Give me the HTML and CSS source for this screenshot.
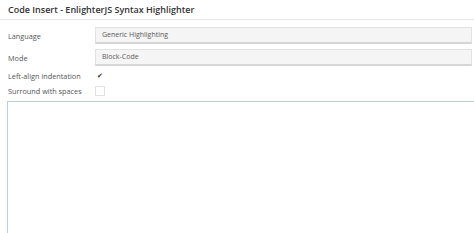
FILE: index.html
```html
<!DOCTYPE html>
<html lang="en">
<head>
  <meta charset="UTF-8">
  <meta name="viewport" content="width=device-width, initial-scale=1.0">
  <title>Code Insert</title>
  <link rel="stylesheet" href="styles.css">
</head>
<body>
  <div class="dialog">
    <div class="dialog-title">Code Insert - EnlighterJS Syntax Highlighter</div>
    <div class="form">
      <div class="row">
        <label class="label">Language</label>
        <div class="select">Generic Highlighting</div>
      </div>
      <div class="row">
        <label class="label">Mode</label>
        <div class="select">Block-Code</div>
      </div>
      <div class="row row-check">
        <label class="label">Left-align indentation</label>
        <span class="checkbox checked">&#10004;</span>
      </div>
      <div class="row row-check">
        <label class="label">Surround with spaces</label>
        <span class="checkbox"></span>
      </div>
    </div>
    <textarea class="code"></textarea>
  </div>
</body>
</html>
```

FILE: styles.css
```css
body {
  margin: 0;
  font-family: "Open Sans", "Noto Sans", sans-serif;
  background: #fff;
  overflow: hidden;
  height: 233px;
}

.dialog {
  width: 474px;
  height: 233px;
  overflow: hidden;
}

.dialog-title {
  height: 19px;
  padding-left: 8px;
  font-size: 9px;
  font-weight: 600;
  line-height: 20px;
  color: #333;
  border-bottom: 1px solid #e6e6e6;
}

.form {
  padding-top: 7px;
}

.row {
  display: flex;
  align-items: center;
  height: 17px;
  margin-bottom: 5px;
}

.row + .row-check {
  margin-top: -1px;
}

.label {
  width: 87px;
  padding-left: 8px;
  font-size: 7.3px;
  color: #555;
}

.select {
  flex: 1;
  height: 14px;
  margin-right: 2px;
  padding-left: 6px;
  font-size: 7px;
  line-height: 14px;
  color: #595959;
  background: #f5f5f5;
  border: 1px solid #e2e2e2;
  border-bottom: 2px solid #d6d6d6;
}

.row-check {
  height: 11px;
  margin-bottom: 5px;
}

.checkbox {
  width: 8px;
  height: 8px;
  border: 1px solid #e0e0e0;
  font-size: 7px;
  line-height: 8px;
  text-align: center;
  color: #333;
}

.checkbox.checked {
  border-color: #fff;
}

.code {
  display: block;
  box-sizing: border-box;
  width: 490px;
  height: 132px;
  margin: 0 0 0 7px;
  border: 1px solid #bcd0e2;
  border-bottom: none;
  outline: none;
  resize: none;
}
```
